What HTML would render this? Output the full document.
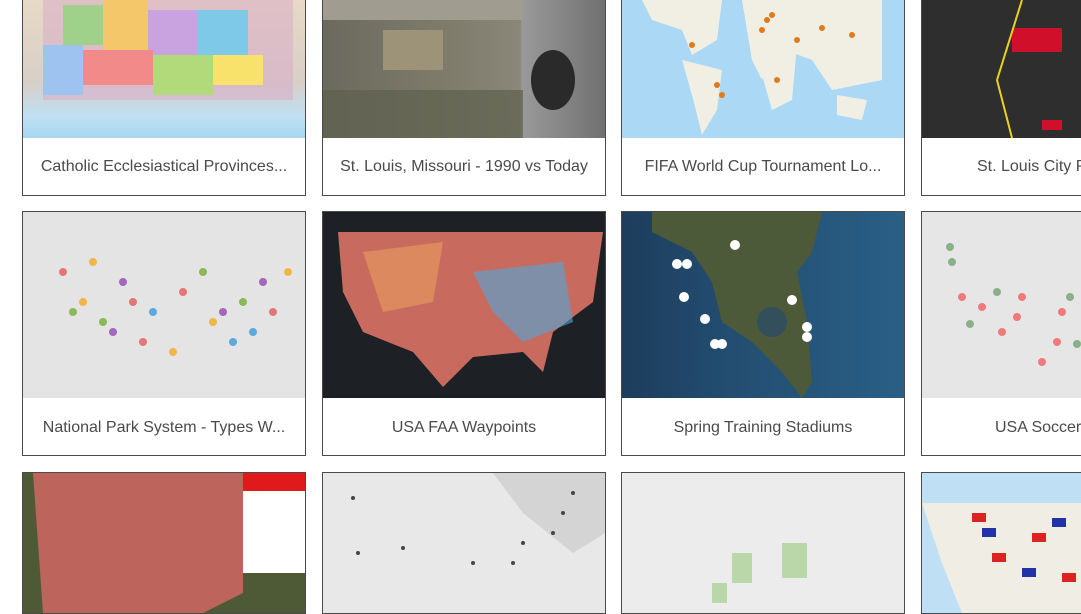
<!DOCTYPE html>
<html><head><meta charset="utf-8"><style>
body{margin:0;width:1081px;height:598px;background:#fff;overflow:hidden;position:relative;font-family:"Liberation Sans",sans-serif}
.c{position:absolute;width:282px;border:1px solid #4a4a4a;background:#fff;overflow:hidden}
.im{position:absolute;left:0;top:0;width:100%}
.t{position:absolute;left:0;right:0;text-align:center;font-size:16px;color:#4a4a4a;white-space:nowrap}
</style></head><body>
<!-- row 1 -->
<div class="c" style="left:22px;top:-1px;height:195px">
 <div class="im" style="height:138px;background:linear-gradient(180deg,#e8d9c6 0%,#d8cfc8 60%,#bfe0f4 85%,#a7d6f2 100%)">
  <svg width="282" height="138"><rect x="20" y="0" width="250" height="100" fill="#d8a8c8" opacity=".5"/><rect x="40" y="5" width="40" height="40" fill="#9fd18b"/><rect x="80" y="0" width="45" height="50" fill="#f4c86a"/><rect x="125" y="10" width="50" height="45" fill="#c8a3e0"/><rect x="175" y="10" width="50" height="50" fill="#7fc9e8"/><rect x="60" y="50" width="70" height="35" fill="#f28a8a"/><rect x="130" y="55" width="60" height="40" fill="#b2d97a"/><rect x="190" y="55" width="50" height="30" fill="#f9e26b"/><rect x="20" y="45" width="40" height="50" fill="#9ec3f0"/></svg>
 </div>
 <div class="t" style="top:158px">Catholic Ecclesiastical Provinces...</div>
</div>
<div class="c" style="left:322px;top:-1px;height:195px">
 <div class="im" style="height:138px;background:linear-gradient(90deg,#6b6a5e 0%,#7d7a6a 40%,#8a8678 70%,#9a9a9a 70.5%,#707070 100%)">
  <svg width="282" height="138"><rect x="0" y="0" width="200" height="20" fill="#a09c90"/><rect x="60" y="30" width="60" height="40" fill="#9c9378"/><ellipse cx="230" cy="80" rx="22" ry="30" fill="#2a2a2a"/><rect x="0" y="90" width="200" height="48" fill="#5e5f4f" opacity=".7"/></svg>
 </div>
 <div class="t" style="top:158px">St. Louis, Missouri - 1990 vs Today</div>
</div>
<div class="c" style="left:621px;top:-1px;height:195px">
 <div class="im" style="height:138px;background:#aad8f5">
  <svg width="282" height="138"><path d="M20 0 H100 L95 40 L70 55 L60 30 L30 20Z" fill="#f1efe4"/><path d="M60 60 L100 70 L95 110 L80 135 L70 95Z" fill="#f1efe4"/><path d="M120 0 H260 V80 L210 90 L190 60 L150 45 L140 80 L130 60Z" fill="#f1efe4"/><path d="M130 40 L175 45 L170 100 L150 110Z" fill="#f1efe4"/><path d="M215 95 L245 100 L240 120 L215 115Z" fill="#f1efe4"/><g fill="#e07a1a"><circle cx="70" cy="45" r="3"/><circle cx="145" cy="20" r="3"/><circle cx="150" cy="15" r="3"/><circle cx="175" cy="40" r="3"/><circle cx="100" cy="95" r="3"/><circle cx="95" cy="85" r="3"/><circle cx="155" cy="80" r="3"/><circle cx="230" cy="35" r="3"/><circle cx="200" cy="28" r="3"/><circle cx="140" cy="30" r="3"/></g></svg>
 </div>
 <div class="t" style="top:158px">FIFA World Cup Tournament Lo...</div>
</div>
<div class="c" style="left:921px;top:-1px;height:195px;width:170px">
 <div class="im" style="height:138px;background:#2e2e2e">
  <svg width="170" height="138"><rect x="90" y="28" width="50" height="24" fill="#d0102a"/><path d="M100 0 L75 80 L90 138" stroke="#e8d21c" stroke-width="2" fill="none"/><rect x="120" y="120" width="20" height="10" fill="#d0102a"/></svg>
 </div>
 <div class="t" style="top:158px;left:55px;text-align:left">St. Louis City P</div>
</div>
<!-- row 2 -->
<div class="c" style="left:22px;top:211px;height:243px">
 <div class="im" style="height:186px;background:#e4e4e4">
  <svg width="282" height="186"><g fill-opacity=".9"><circle cx="40" cy="60" r="4" fill="#e26a6a"/><circle cx="60" cy="90" r="4" fill="#f2b134"/><circle cx="80" cy="110" r="4" fill="#7fb24a"/><circle cx="100" cy="70" r="4" fill="#9b59b6"/><circle cx="130" cy="100" r="4" fill="#4aa3df"/><circle cx="160" cy="80" r="4" fill="#e26a6a"/><circle cx="190" cy="110" r="4" fill="#f2b134"/><circle cx="220" cy="90" r="4" fill="#7fb24a"/><circle cx="240" cy="70" r="4" fill="#9b59b6"/><circle cx="210" cy="130" r="4" fill="#4aa3df"/><circle cx="70" cy="50" r="4" fill="#f2b134"/><circle cx="120" cy="130" r="4" fill="#e26a6a"/><circle cx="180" cy="60" r="4" fill="#7fb24a"/><circle cx="250" cy="100" r="4" fill="#e26a6a"/><circle cx="90" cy="120" r="4" fill="#9b59b6"/><circle cx="150" cy="140" r="4" fill="#f2b134"/><circle cx="230" cy="120" r="4" fill="#4aa3df"/><circle cx="50" cy="100" r="4" fill="#7fb24a"/><circle cx="110" cy="90" r="4" fill="#e26a6a"/><circle cx="200" cy="100" r="4" fill="#9b59b6"/><circle cx="265" cy="60" r="4" fill="#f2b134"/></g></svg>
 </div>
 <div class="t" style="top:207px">National Park System - Types W...</div>
</div>
<div class="c" style="left:322px;top:211px;height:243px">
 <div class="im" style="height:186px;background:#1d2025">
  <svg width="282" height="186"><path d="M15 20 H280 L270 90 L230 120 L220 160 L200 140 L150 145 L120 175 L90 140 L40 120 L20 80Z" fill="#e8786a" opacity=".85"/><path d="M150 60 L240 50 L250 110 L200 130 L170 100Z" fill="#4fa8d8" opacity=".6"/><path d="M40 40 L120 30 L110 90 L60 100Z" fill="#f0a860" opacity=".5"/></svg>
 </div>
 <div class="t" style="top:207px">USA FAA Waypoints</div>
</div>
<div class="c" style="left:621px;top:211px;height:243px">
 <div class="im" style="height:186px;background:linear-gradient(90deg,#1d3d5c,#234e72 40%,#2a5f86)">
  <svg width="282" height="186"><path d="M30 0 H200 L190 40 L175 60 L185 110 L190 170 L180 186 L160 160 L130 130 L100 110 L90 70 L70 40 L30 20Z" fill="#4d5a3a"/><ellipse cx="150" cy="110" rx="15" ry="15" fill="#344f5c"/><g fill="#fff"><circle cx="113" cy="33" r="5"/><circle cx="55" cy="52" r="5"/><circle cx="65" cy="52" r="5"/><circle cx="62" cy="85" r="5"/><circle cx="170" cy="88" r="5"/><circle cx="185" cy="115" r="5"/><circle cx="185" cy="125" r="5"/><circle cx="83" cy="107" r="5"/><circle cx="100" cy="132" r="5"/><circle cx="93" cy="132" r="5"/></g></svg>
 </div>
 <div class="t" style="top:207px">Spring Training Stadiums</div>
</div>
<div class="c" style="left:921px;top:211px;height:243px;width:170px">
 <div class="im" style="height:186px;background:#e6e6e6">
  <svg width="170" height="186"><g fill="#f07a7a"><circle cx="40" cy="85" r="4"/><circle cx="60" cy="95" r="4"/><circle cx="95" cy="105" r="4"/><circle cx="80" cy="120" r="4"/><circle cx="140" cy="100" r="4"/><circle cx="135" cy="130" r="4"/><circle cx="120" cy="150" r="4"/><circle cx="100" cy="85" r="4"/></g><g fill="#8ab08a"><circle cx="28" cy="35" r="4"/><circle cx="30" cy="50" r="4"/><circle cx="75" cy="80" r="4"/><circle cx="148" cy="85" r="4"/><circle cx="48" cy="112" r="4"/><circle cx="155" cy="132" r="4"/></g></svg>
 </div>
 <div class="t" style="top:207px;left:73px;text-align:left">USA Soccer</div>
</div>
<!-- row 3 -->
<div class="c" style="left:22px;top:472px;height:140px">
 <div class="im" style="height:140px;background:#4e5a36">
  <svg width="282" height="140"><path d="M10 0 H220 V120 L180 140 H20Z" fill="#e36a6a" opacity=".75"/><rect x="220" y="0" width="62" height="100" fill="#fff"/><rect x="220" y="0" width="62" height="18" fill="#e01a1a"/></svg>
 </div>
</div>
<div class="c" style="left:322px;top:472px;height:140px">
 <div class="im" style="height:140px;background:#e8e8e8">
  <svg width="282" height="140"><path d="M170 0 H282 V60 L250 80 L200 40Z" fill="#d4d4d4"/><g fill="#444"><circle cx="30" cy="25" r="2"/><circle cx="80" cy="75" r="2"/><circle cx="150" cy="90" r="2"/><circle cx="200" cy="70" r="2"/><circle cx="230" cy="60" r="2"/><circle cx="250" cy="20" r="2"/><circle cx="190" cy="90" r="2"/><circle cx="35" cy="80" r="2"/><circle cx="240" cy="40" r="2"/></g></svg>
 </div>
</div>
<div class="c" style="left:621px;top:472px;height:140px">
 <div class="im" style="height:140px;background:#ececec">
  <svg width="282" height="140"><g fill="#b9d7a8"><rect x="110" y="80" width="20" height="30"/><rect x="160" y="70" width="25" height="35"/><rect x="90" y="110" width="15" height="20"/></g></svg>
 </div>
</div>
<div class="c" style="left:921px;top:472px;height:140px;width:170px">
 <div class="im" style="height:140px;background:#bfe0f4">
  <svg width="170" height="140"><path d="M0 30 H170 V140 H40 L20 90Z" fill="#f0ede4"/><g fill="#d22"><rect x="50" y="40" width="14" height="9"/><rect x="70" y="80" width="14" height="9"/><rect x="110" y="60" width="14" height="9"/><rect x="140" y="100" width="14" height="9"/></g><g fill="#23a"><rect x="60" y="55" width="14" height="9"/><rect x="100" y="95" width="14" height="9"/><rect x="130" y="45" width="14" height="9"/></g></svg>
 </div>
</div>
</body></html>
